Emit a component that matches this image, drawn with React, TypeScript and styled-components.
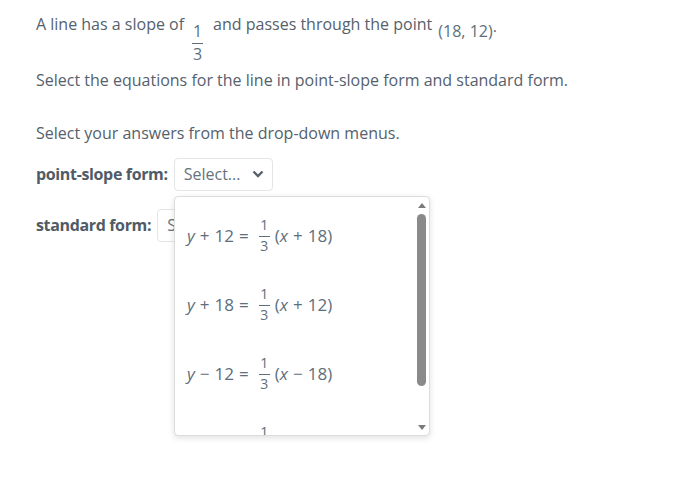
import styled, { createGlobalStyle } from "styled-components";

const GlobalStyle = createGlobalStyle`
  html, body, #root {
    height: 100%;
  }
  body {
    margin: 0;
    background: #fff;
    font-family: "Open Sans", "Liberation Sans", sans-serif;
    color: #55616c;
  }
`;

const Page = styled.div`
  position: relative;
  min-height: 100%;
  box-sizing: border-box;
  padding: 12px 36px;
  font-size: 16px;
`;

const Prompt = styled.p`
  margin: 0;
  line-height: 24px;
`;

const Frac = styled.span<{ $size?: number; $gap?: number }>`
  display: inline-flex;
  flex-direction: column;
  align-items: center;
  font-size: ${(p) => p.$size ?? 14}px;
  line-height: 1.05;
  margin: 0 5px;
  color: #5d6f7c;
  --gap: ${(p) => p.$gap ?? 3}px;
`;

const FracBar = styled.span`
  align-self: stretch;
  min-width: 11px;
  border-top: 1px solid currentColor;
  margin: var(--gap) 0 calc(var(--gap) - 1px);
`;

const SlopeFrac = styled(Frac)`
  vertical-align: -7px;
  margin: 0 10px 0 8px;
`;

const Point = styled.span`
  font-size: 16px;
  color: #5d6f7c;
  vertical-align: -7px;
  margin-left: 2px;
`;

const Line = styled.p<{ $top: number }>`
  margin: ${(p) => p.$top}px 0 0;
  line-height: 24px;
`;

const Field = styled.div<{ $top: number }>`
  display: flex;
  align-items: center;
  gap: 6px;
  margin-top: ${(p) => p.$top}px;
`;

const Label = styled.span`
  font-weight: 700;
  letter-spacing: -0.35px;
  color: #4f5b66;
`;

const SelectBox = styled.div`
  display: flex;
  align-items: center;
  justify-content: space-between;
  gap: 12px;
  height: 33px;
  box-sizing: border-box;
  padding: 0 8px 0 9px;
  border: 1px solid #e3e5e7;
  border-radius: 4px;
  color: #66737e;
  background: #fff;
`;

/* open dropdown of the second select, drawn over the form */
const Menu = styled.div`
  position: absolute;
  left: 174px;
  top: 196px;
  width: 256px;
  height: 240px;
  box-sizing: border-box;
  display: flex;
  border: 1px solid #dcdcdc;
  border-radius: 4px;
  background: #fff;
  box-shadow: 0 2px 6px rgba(0, 0, 0, 0.12);
  overflow: hidden;
`;

const OptionList = styled.div`
  flex: 1;
  overflow: hidden;
  padding-top: 4px;
`;

const Option = styled.div`
  display: flex;
  align-items: center;
  height: 69px;
  padding: 0 12px;
  font-size: 17px;
  color: #5d6f7c;
  white-space: nowrap;
`;

const Var = styled.i`
  font-size: 17px;
`;

const Op = styled.span`
  margin: 0 5px;
`;

const Rail = styled.div`
  width: 15px;
  display: flex;
  flex-direction: column;
  align-items: center;
  padding: 6px 0 5px;
  box-sizing: border-box;
`;

const Arrow = styled.span<{ $down?: boolean }>`
  width: 0;
  height: 0;
  border-left: 4px solid transparent;
  border-right: 4px solid transparent;
  ${(p) =>
    p.$down ? "border-top: 5px solid #7a7a7a;" : "border-bottom: 5px solid #7a7a7a;"}
  margin-top: ${(p) => (p.$down ? "auto" : "0")};
`;

const Thumb = styled.span`
  width: 9px;
  height: 172px;
  margin-top: 6px;
  border-radius: 5px;
  background: #8a8a8a;
`;

function Chevron() {
  return (
    <svg width="12" height="8" viewBox="0 0 12 8">
      <path d="M1.5 1.5 6 6l4.5-4.5" fill="none" stroke="#56626d" strokeWidth="2.4" />
    </svg>
  );
}

const options = [
  ["+", "12", "+", "18"],
  ["+", "18", "+", "12"],
  ["−", "12", "−", "18"],
  ["−", "18", "−", "12"],
];

export default function App() {
  return (
    <>
      <GlobalStyle />
      <Page>
        <Prompt>
          A line has a slope of
          <SlopeFrac $size={16} $gap={3}>
            <span>1</span>
            <FracBar />
            <span>3</span>
          </SlopeFrac>
          and passes through the point <Point>(18, 12)·</Point>
        </Prompt>
        <Line $top={5}>Select the equations for the line in point-slope form and standard form.</Line>
        <Line $top={29}>Select your answers from the drop-down menus.</Line>
        <Field $top={13}>
          <Label>point-slope form:</Label>
          <SelectBox>
            Select...
            <Chevron />
          </SelectBox>
        </Field>
        <Field $top={18}>
          <Label>standard form:</Label>
          <SelectBox>
            Select...
            <Chevron />
          </SelectBox>
        </Field>
        <Menu>
          <OptionList>
            {options.map(([s1, a, s2, b], i) => (
              <Option key={i}>
                <Var>y</Var>
                <Op>{s1}</Op>
                {a}
                <Op>=</Op>
                <Frac>
                  <span>1</span>
                  <FracBar />
                  <span>3</span>
                </Frac>
                (<Var>x</Var>
                <Op>{s2}</Op>
                {b})
              </Option>
            ))}
          </OptionList>
          <Rail>
            <Arrow />
            <Thumb />
            <Arrow $down />
          </Rail>
        </Menu>
      </Page>
    </>
  );
}
